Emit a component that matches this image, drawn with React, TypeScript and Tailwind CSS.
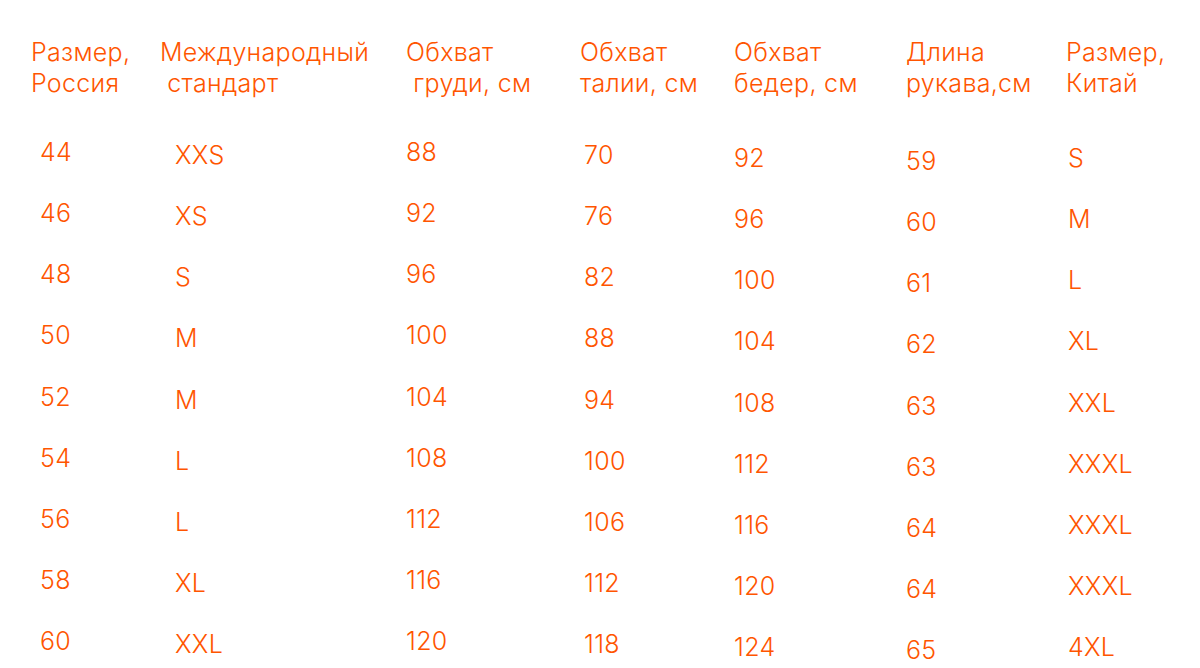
const HEADERS = [
  ["Размер,", "Россия"],
  ["Международный", " стандарт"],
  ["Обхват", " груди, см"],
  ["Обхват", "талии, см"],
  ["Обхват", "бедер, см"],
  ["Длина", "рукава,см"],
  ["Размер,", "Китай"],
]

const COLUMNS = [
  ["44", "46", "48", "50", "52", "54", "56", "58", "60"],
  ["XXS", "XS", "S", "M", "M", "L", "L", "XL", "XXL"],
  ["88", "92", "96", "100", "104", "108", "112", "116", "120"],
  ["70", "76", "82", "88", "94", "100", "106", "112", "118"],
  ["92", "96", "100", "104", "108", "112", "116", "120", "124"],
  ["59", "60", "61", "62", "63", "63", "64", "64", "65"],
  ["S", "M", "L", "XL", "XXL", "XXXL", "XXXL", "XXXL", "4XL"],
]

// per-column nudges of the value list (the source table is a bit uneven)
const VALUE_OFFSET = [
  "mt-[23px] pl-[9px]",
  "mt-[26px] pl-[15px]",
  "mt-[23px] pl-0",
  "mt-[26px] pl-[4px]",
  "mt-[29px] pl-0",
  "mt-[32px] pl-0",
  "mt-[29px] pl-[2px]",
]

export default function App() {
  return (
    <div className="h-[668px] w-[1200px] overflow-hidden bg-white pl-[31px] pt-[37px] font-['Inter','Liberation_Sans',sans-serif] text-[25px] font-light tracking-[0.3px] text-[#ff5500]">
      <div className="grid grid-cols-[129px_246px_174px_154px_172px_160px_1fr]">
        {HEADERS.map((h, i) => (
          <div key={i} className="flex flex-col">
            <div className="leading-[31px] whitespace-pre">
              <p>{h[0]}</p>
              <p>{h[1]}</p>
            </div>
            <div className={`flex flex-col ${VALUE_OFFSET[i]}`}>
              {COLUMNS[i].map((v, j) => (
                <p key={j} className="h-[61.15px] leading-[61px]">
                  {v}
                </p>
              ))}
            </div>
          </div>
        ))}
      </div>
    </div>
  )
}
